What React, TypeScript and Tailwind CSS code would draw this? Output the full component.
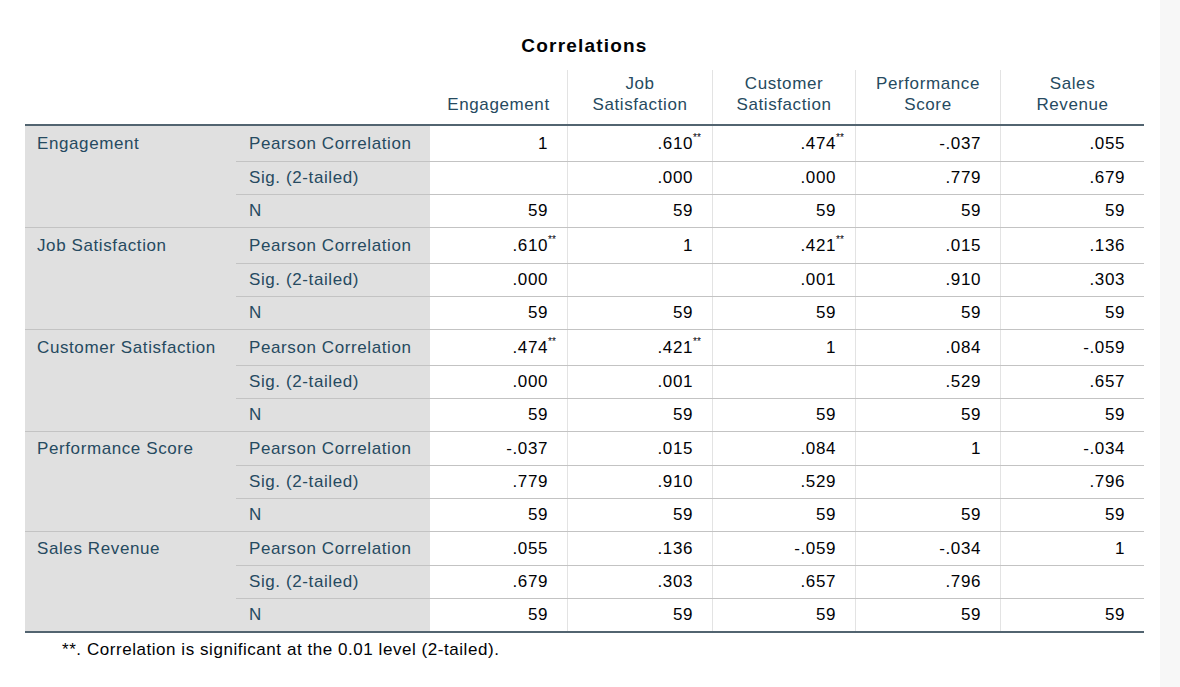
import React from 'react';

type Group = {
  label: string;
  r: string[];
  sig: string[];
};

const groups: Group[] = [
  { label: 'Engagement', r: ['1', '.610**', '.474**', '-.037', '.055'], sig: ['', '.000', '.000', '.779', '.679'] },
  { label: 'Job Satisfaction', r: ['.610**', '1', '.421**', '.015', '.136'], sig: ['.000', '', '.001', '.910', '.303'] },
  { label: 'Customer Satisfaction', r: ['.474**', '.421**', '1', '.084', '-.059'], sig: ['.000', '.001', '', '.529', '.657'] },
  { label: 'Performance Score', r: ['-.037', '.015', '.084', '1', '-.034'], sig: ['.779', '.910', '.529', '', '.796'] },
  { label: 'Sales Revenue', r: ['.055', '.136', '-.059', '-.034', '1'], sig: ['.679', '.303', '.657', '.796', ''] },
];

const colWidths = ['w-[137px]', 'w-[145px]', 'w-[143px]', 'w-[145px]', 'w-[144px]'];
const headers = [['Engagement'], ['Job', 'Satisfaction'], ['Customer', 'Satisfaction'], ['Performance', 'Score'], ['Sales', 'Revenue']];

const Value: React.FC<{ v: string }> = ({ v }) => {
  const star = v.endsWith('**');
  const num = star ? v.slice(0, -2) : v;
  return (
    <span className="whitespace-nowrap">
      {num}
      {star && (
        <span className="inline-block w-0 whitespace-nowrap align-[8px] text-[10px] leading-none tracking-normal">
          <span>**</span>
        </span>
      )}
    </span>
  );
};

const DataRow: React.FC<{ name: string; values: string[]; tall: boolean; top: boolean }> = ({ name, values, tall, top }) => (
  <div className={`flex ${tall ? 'h-[35px]' : 'h-[33px]'} ${top ? 'border-t border-[#c3c3c3]' : ''}`}>
    <div className="w-[194px] bg-[#e0e0e0] pl-[13px] flex items-center text-[#264a60]">{name}</div>
    {values.map((v, i) => (
      <div
        key={i}
        className={`${colWidths[i]} ${i > 0 ? 'border-l border-[#e3e3e3]' : ''} flex items-center justify-end pr-[19px] text-[#010205]`}
      >
        <Value v={v} />
      </div>
    ))}
  </div>
);

const App: React.FC = () => {
  return (
    <div className="w-[1180px] h-[687px] flex bg-white font-['Liberation_Sans',Arial,sans-serif] text-[17px] tracking-[0.6px] overflow-hidden">
      <div className="w-[1160px] pl-[25px] pt-[34px]">
        {/* Title */}
        <div className="w-[1119px] h-[24px] text-center leading-[24px] text-[19px] font-bold tracking-[1.2px] text-[#010205]">
          Correlations
        </div>

        <div className="w-[1119px] mt-[12px]">
          {/* Column headers */}
          <div className="flex h-[54px]">
            <div className="w-[405px]"></div>
            {headers.map((h, i) => (
              <div
                key={i}
                className={`${colWidths[i]} ${i > 0 ? 'border-l border-[#e3e3e3]' : ''} flex flex-col justify-end items-center pb-[9px] leading-[21px] text-[#264a60]`}
              >
                {h.map((line) => (
                  <span key={line}>{line}</span>
                ))}
              </div>
            ))}
          </div>

          {/* Body */}
          <div className="border-t-2 border-b-2 border-[#526470]">
            {groups.map((g, gi) => {
              const tall = g.r.some((v) => v.endsWith('**'));
              return (
                <div key={g.label} className={`flex ${gi > 0 ? 'border-t border-[#c3c3c3]' : ''}`}>
                  <div className="w-[211px] bg-[#e0e0e0] pl-[12px] text-[#264a60]">
                    <div className={`${tall ? 'h-[35px]' : 'h-[33px]'} flex items-center whitespace-nowrap`}>{g.label}</div>
                  </div>
                  <div className="flex flex-col">
                    <DataRow name="Pearson Correlation" values={g.r} tall={tall} top={false} />
                    <DataRow name="Sig. (2-tailed)" values={g.sig} tall={false} top={true} />
                    <DataRow name="N" values={['59', '59', '59', '59', '59']} tall={false} top={true} />
                  </div>
                </div>
              );
            })}
          </div>

          {/* Footnote */}
          <div className="mt-[7px] pl-[37px] leading-[20px] text-[17px] tracking-[0.55px] text-[#010205]">
            **. Correlation is significant at the 0.01 level (2-tailed).
          </div>
        </div>
      </div>
      <div className="flex-1 bg-[#f7f7f7]"></div>
    </div>
  );
};

export default App;
